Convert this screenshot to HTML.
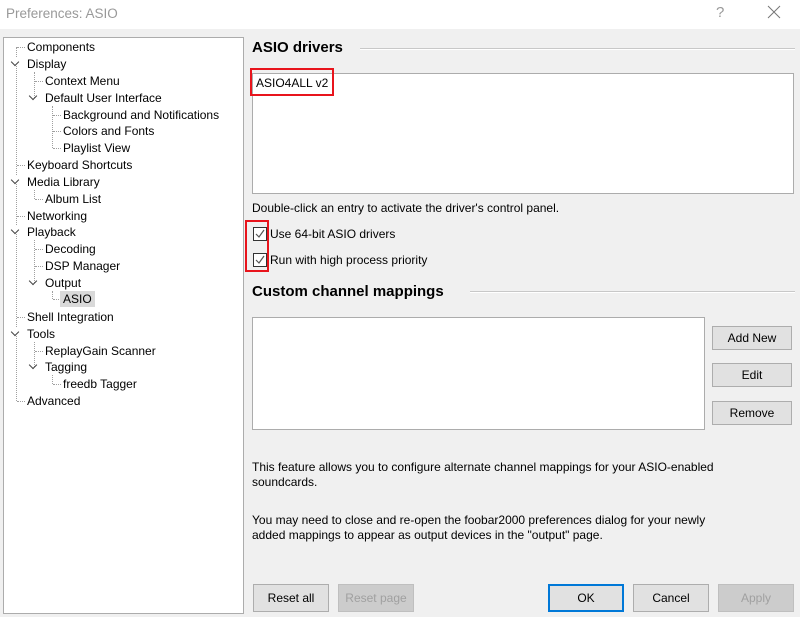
<!DOCTYPE html>
<html><head><style>
body{margin:0;width:800px;height:617px;background:#f0f0f0;font-family:"Segoe UI","Liberation Sans",sans-serif;font-size:12px;color:#000;position:relative;overflow:hidden}
.a{position:absolute;white-space:nowrap}
.t{position:absolute;white-space:nowrap;line-height:16px;height:16px}
.v{position:absolute;border-left:1px dotted #a0a0a0;width:0}
.h{position:absolute;border-top:1px dotted #a0a0a0;height:0}
.chev{position:absolute;width:5px;height:5px;border-right:1.3px solid #444;border-bottom:1.3px solid #444;transform:rotate(45deg)}
.btn{position:absolute;background:#e1e1e1;border:1px solid #adadad;box-sizing:border-box;text-align:center;line-height:22px}
.dis{color:#a0a0a0;background:#cccccc;border-color:#bfbfbf}
.hd{position:absolute;font-weight:bold;font-size:15px;white-space:nowrap}
.ln{position:absolute;height:1px;background:#c8c8c8;border-bottom:1px solid #fff}
.cb{position:absolute;width:12px;height:12px;border:1px solid #333;background:#fff}
</style></head><body>
<div class="a" style="left:0;top:0;width:800px;height:29px;background:#fff"></div>
<div class="a" style="left:6px;top:6px;font-size:13.5px;color:#999">Preferences: ASIO</div>
<div class="a" style="left:716px;top:4px;font-size:15px;color:#999">?</div>
<svg class="a" style="left:767px;top:5px" width="14" height="14"><path d="M1 1L13 13M13 1L1 13" stroke="#777" stroke-width="1"/></svg>

<div class="a" style="left:3px;top:37px;width:239px;height:575px;background:#fff;border:1px solid #acacac"></div>
<div class="v" style="left:16px;top:47px;height:354px"></div>
<div class="v" style="left:34px;top:72px;height:26px"></div>
<div class="v" style="left:34px;top:190px;height:9px"></div>
<div class="v" style="left:34px;top:240px;height:43px"></div>
<div class="v" style="left:34px;top:342px;height:25px"></div>
<div class="v" style="left:52px;top:106px;height:42px"></div>
<div class="v" style="left:52px;top:291px;height:8px"></div>
<div class="v" style="left:52px;top:375px;height:9px"></div>
<div class="h" style="left:17px;top:47px;width:8px"></div>
<div class="h" style="left:17px;top:165px;width:8px"></div>
<div class="h" style="left:17px;top:216px;width:8px"></div>
<div class="h" style="left:17px;top:317px;width:8px"></div>
<div class="h" style="left:17px;top:401px;width:8px"></div>
<div class="h" style="left:35px;top:81px;width:8px"></div>
<div class="h" style="left:35px;top:199px;width:8px"></div>
<div class="h" style="left:35px;top:249px;width:8px"></div>
<div class="h" style="left:35px;top:266px;width:8px"></div>
<div class="h" style="left:35px;top:351px;width:8px"></div>
<div class="h" style="left:53px;top:115px;width:8px"></div>
<div class="h" style="left:53px;top:131px;width:8px"></div>
<div class="h" style="left:53px;top:148px;width:8px"></div>
<div class="h" style="left:53px;top:299px;width:8px"></div>
<div class="h" style="left:53px;top:384px;width:8px"></div>
<div class="a" style="left:12px;top:57px;width:8px;height:9px;background:#fff"></div><div class="chev" style="left:12px;top:59px"></div>
<div class="a" style="left:12px;top:175px;width:8px;height:9px;background:#fff"></div><div class="chev" style="left:12px;top:177px"></div>
<div class="a" style="left:12px;top:225px;width:8px;height:9px;background:#fff"></div><div class="chev" style="left:12px;top:227px"></div>
<div class="a" style="left:12px;top:327px;width:8px;height:9px;background:#fff"></div><div class="chev" style="left:12px;top:329px"></div>
<div class="chev" style="left:30px;top:93px"></div>
<div class="chev" style="left:30px;top:278px"></div>
<div class="chev" style="left:30px;top:362px"></div>

<div class="t" style="left:27px;top:39px">Components</div>
<div class="t" style="left:27px;top:56px">Display</div>
<div class="t" style="left:45px;top:73px">Context Menu</div>
<div class="t" style="left:45px;top:90px">Default User Interface</div>
<div class="t" style="left:63px;top:107px">Background and Notifications</div>
<div class="t" style="left:63px;top:123px">Colors and Fonts</div>
<div class="t" style="left:63px;top:140px">Playlist View</div>
<div class="t" style="left:27px;top:157px">Keyboard Shortcuts</div>
<div class="t" style="left:27px;top:174px">Media Library</div>
<div class="t" style="left:45px;top:191px">Album List</div>
<div class="t" style="left:27px;top:208px">Networking</div>
<div class="t" style="left:27px;top:224px">Playback</div>
<div class="t" style="left:45px;top:241px">Decoding</div>
<div class="t" style="left:45px;top:258px">DSP Manager</div>
<div class="t" style="left:45px;top:275px">Output</div>
<div class="t" style="left:60px;top:291px;background:#d9d9d9;padding:0 3px">ASIO</div>
<div class="t" style="left:27px;top:309px">Shell Integration</div>
<div class="t" style="left:27px;top:326px">Tools</div>
<div class="t" style="left:45px;top:343px">ReplayGain Scanner</div>
<div class="t" style="left:45px;top:359px">Tagging</div>
<div class="t" style="left:63px;top:376px">freedb Tagger</div>
<div class="t" style="left:27px;top:393px">Advanced</div>

<div class="hd" style="left:252px;top:39px">ASIO drivers</div>
<div class="ln" style="left:360px;top:48px;width:435px"></div>
<div class="a" style="left:252px;top:73px;width:540px;height:119px;background:#fff;border:1px solid #acacac"></div>
<div class="a" style="left:250px;top:68px;width:80px;height:24px;border:2px solid #e8141c"></div>
<div class="a" style="left:256px;top:76px">ASIO4ALL v2</div>
<div class="a" style="left:252px;top:201px">Double-click an entry to activate the driver's control panel.</div>
<div class="cb" style="left:253px;top:227px"></div>
<div class="cb" style="left:253px;top:253px"></div>
<svg class="a" style="left:254px;top:228px" width="12" height="40"><path d="M2 6L5 9L10 2M2 32L5 35L10 28" stroke="#555" stroke-width="1.2" fill="none"/></svg>
<div class="a" style="left:245px;top:220px;width:20px;height:48px;border:2px solid #e8141c"></div>
<div class="a" style="left:270px;top:227px">Use 64-bit ASIO drivers</div>
<div class="a" style="left:270px;top:253px">Run with high process priority</div>
<div class="hd" style="left:252px;top:283px">Custom channel mappings</div>
<div class="ln" style="left:470px;top:291px;width:325px"></div>
<div class="a" style="left:252px;top:317px;width:451px;height:111px;background:#fff;border:1px solid #acacac"></div>
<div class="btn" style="left:712px;top:326px;width:80px;height:24px">Add New</div>
<div class="btn" style="left:712px;top:363px;width:80px;height:24px">Edit</div>
<div class="btn" style="left:712px;top:401px;width:80px;height:24px">Remove</div>
<div class="a" style="left:252px;top:460px;line-height:15px">This feature allows you to configure alternate channel mappings for your ASIO-enabled<br>soundcards.</div>
<div class="a" style="left:252px;top:513px;line-height:15px">You may need to close and re-open the foobar2000 preferences dialog for your newly<br>added mappings to appear as output devices in the "output" page.</div>

<div class="btn" style="left:253px;top:584px;width:76px;height:28px;line-height:27px">Reset all</div>
<div class="btn dis" style="left:338px;top:584px;width:76px;height:28px;line-height:27px">Reset page</div>
<div class="btn" style="left:548px;top:584px;width:76px;height:28px;line-height:25px;border:2px solid #0078d7">OK</div>
<div class="btn" style="left:633px;top:584px;width:76px;height:28px;line-height:27px">Cancel</div>
<div class="btn dis" style="left:718px;top:584px;width:76px;height:28px;line-height:27px">Apply</div>
</body></html>
